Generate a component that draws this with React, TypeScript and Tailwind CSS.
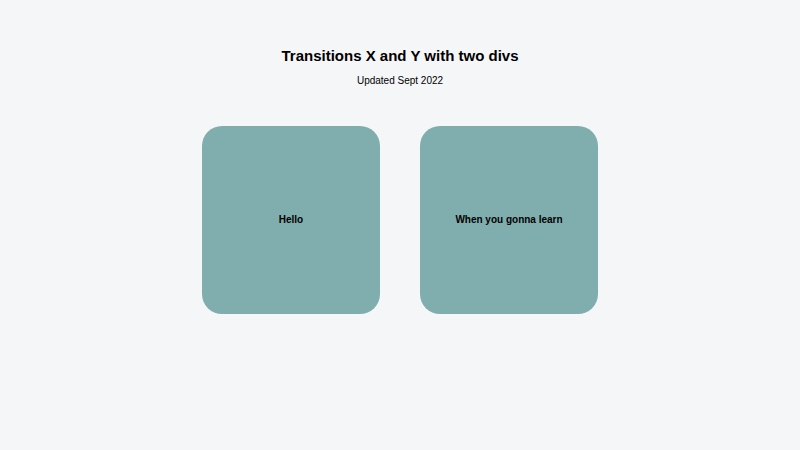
import React from 'react';

const cards = ['Hello', 'When you gonna learn'];

const App: React.FC = () => {
  return (
    <div className="min-h-[450px] w-full bg-[#f5f6f8] flex flex-col items-center pt-[46px] text-black" style={{ fontFamily: '"Liberation Sans", Arial, sans-serif' }}>
      <h1 className="text-[15px] leading-[20px] font-bold">Transitions X and Y with two divs</h1>
      <p className="mt-[8px] text-[10px] leading-[14px]">Updated Sept 2022</p>

      <div className="mt-[38px] flex gap-[40px]">
        {cards.map(text => (
          <div
            key={text}
            className="w-[178px] h-[188px] rounded-[20px] bg-[#80aeae] flex items-center justify-center pb-[2px]"
          >
            <span className="text-[10px] font-bold">{text}</span>
          </div>
        ))}
      </div>
    </div>
  );
};

export default App;
